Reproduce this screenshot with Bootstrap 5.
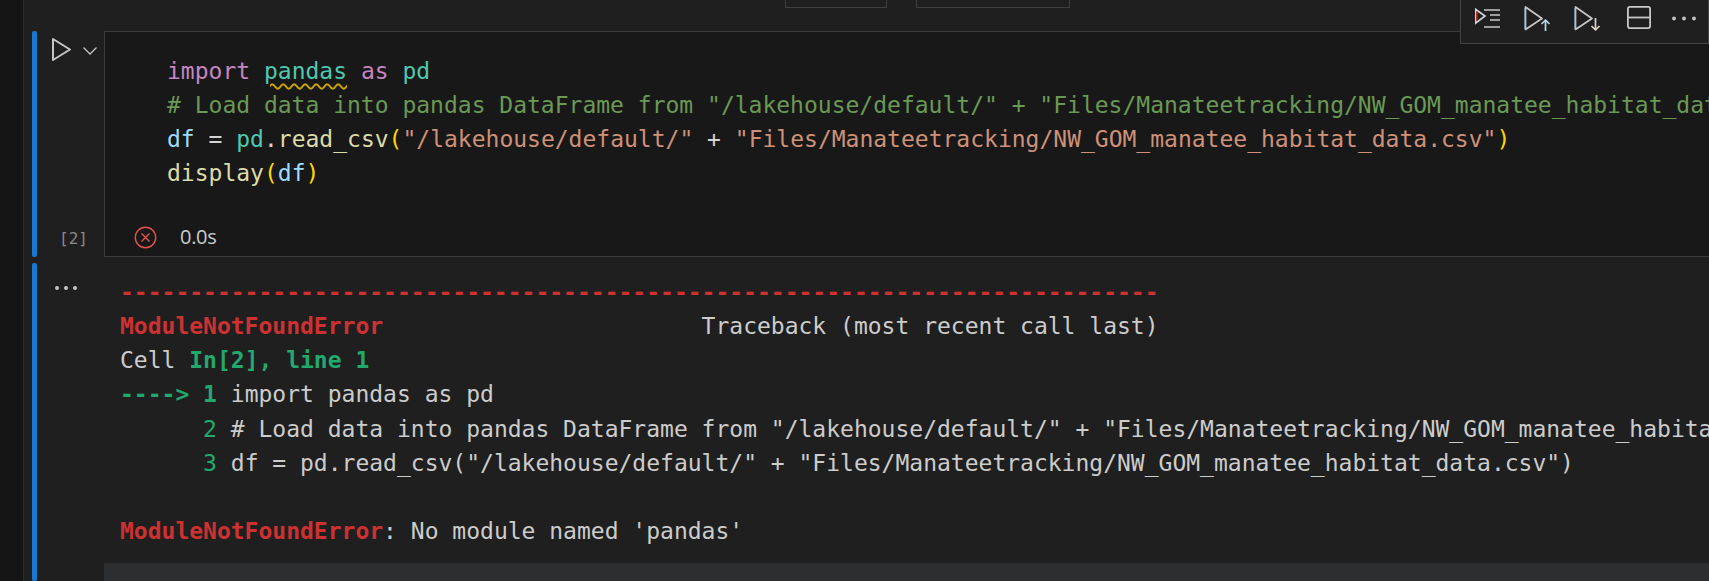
<!doctype html>
<html lang="en"><head><meta charset="utf-8">
<link href="https://cdn.jsdelivr.net/npm/bootstrap@5.3.0/dist/css/bootstrap.min.css" rel="stylesheet">
<style>
html,body{height:581px;overflow:hidden;background:#1f1f1f;margin:0}
.nb-page{height:581px;width:1709px;position:relative;overflow:hidden}
.nb-gutter{width:24px;background:#141414;border-right:1px solid #2a2a2a;flex:none}
.nb-main{flex:1;min-width:0;padding-left:8px;padding-top:31px}
.nb-tab{position:absolute;top:-1px;height:9px;border:1px solid #3f3f3f;background:#1f1f1f}
.nb-tools{position:absolute;top:-1px;left:1460px;width:249px;height:45px;border:1px solid #454545;background:#1f1f1f;z-index:3;padding:0 0 0 13px}
.nb-cell{height:226px}
.nb-bar{width:5px;background:#1a78d0;border-radius:2px;flex:none}
.nb-side{width:67px;flex:none;position:relative}
.nb-editor{flex:1;min-width:0;background:#181818;border:1px solid #3c3c3c;border-right:0;overflow:hidden;padding:22px 0 0 62px;position:relative}
.nb-code,.nb-out{font-family:"DejaVu Sans Mono","Liberation Mono",monospace;font-size:23px;white-space:pre;font-variant-ligatures:none}
.nb-line{height:34.17px;line-height:34.17px}
.nb-code{color:#d4d4d4}
.kw{color:#c586c0}.mod{color:#4ec9b0}.cmt{color:#6a9955}.var{color:#9cdcfe}.fn{color:#dcdcaa}.str{color:#ce9178}.par{color:#ffd700}
.wavy{text-decoration:underline wavy #cca700 1.8px;text-underline-offset:4px}
.nb-status{position:absolute;left:29px;top:188px;height:34px;gap:23px;font-family:"Open Sans","Noto Sans",sans-serif;font-size:20px;color:#cccccc;letter-spacing:-.3px}
.nb-count{position:absolute;left:22px;top:198px;font-family:"DejaVu Sans Mono",monospace;font-size:16px;line-height:20px;color:#8a8a8a}
.nb-output{height:318px;margin-top:6px}
.nb-out{color:#cccccc;padding:12px 0 0 16px;flex:1;min-width:0;overflow:hidden}
.nb-rule{color:#cd3131;font-weight:700}
.nb-errb{color:#cd3131;font-weight:700}
.nb-grn{color:#23a86f}.nb-grnb{color:#23a86f;font-weight:700}
.nb-foot{position:absolute;left:104px;right:0;top:563px;height:18px;background:#2d2e30}
.nb-dots{position:absolute;left:17px;top:22px}
.nb-play{position:absolute;left:14px;top:6px}
.nb-chev{position:absolute;left:45px;top:15px}
</style></head>
<body>
<div class="nb-page d-flex">
  <div class="nb-gutter"></div>
  <div class="nb-main">
    <div class="nb-cell d-flex">
      <div class="nb-bar"></div>
      <div class="nb-side">
        <svg class="nb-play" width="22" height="25" viewBox="0 0 22 25" fill="none" stroke="#c5c5c5" stroke-width="2" stroke-linejoin="round"><path d="M2 2 L19 12.500 L2 23 Z"/></svg>
        <svg class="nb-chev" width="16" height="10" viewBox="0 0 16 10" fill="none" stroke="#c5c5c5" stroke-width="1.3"><path d="M1.500 1.500 L8 8 L14.500 1.500"/></svg>
        <div class="nb-count">[2]</div>
      </div>
      <div class="nb-editor">
        <div class="nb-code"><div class="nb-line"><span class="kw">import</span> <span class="mod wavy">pandas</span> <span class="kw">as</span> <span class="mod">pd</span></div><div class="nb-line cmt"># Load data into pandas DataFrame from "/lakehouse/default/" + "Files/Manateetracking/NW_GOM_manatee_habitat_data.csv"</div><div class="nb-line"><span class="var">df</span> = <span class="mod">pd</span>.<span class="fn">read_csv</span><span class="par">(</span><span class="str">"/lakehouse/default/"</span> + <span class="str">"Files/Manateetracking/NW_GOM_manatee_habitat_data.csv"</span><span class="par">)</span></div><div class="nb-line"><span class="fn">display</span><span class="par">(</span><span class="var">df</span><span class="par">)</span></div></div>
        <div class="nb-status d-flex align-items-center">
          <svg width="23" height="23" viewBox="0 0 23 23" fill="none" stroke="#e5524c" stroke-width="1.4"><circle cx="11.500" cy="11.500" r="10.200"/><path d="M7.500 7.500 L15.500 15.500 M15.500 7.500 L7.500 15.500"/></svg>
          <span>0.0s</span>
        </div>
      </div>
    </div>
    <div class="nb-output d-flex">
      <div class="nb-bar"></div>
      <div class="nb-side">
        <svg class="nb-dots" width="24" height="6" viewBox="0 0 24 6" fill="#c5c5c5"><circle cx="3" cy="3" r="2"/><circle cx="12" cy="3" r="2"/><circle cx="21" cy="3" r="2"/></svg>
      </div>
      <div class="nb-out"><div class="nb-line nb-rule">---------------------------------------------------------------------------</div><div class="nb-line"><span class="nb-errb">ModuleNotFoundError</span>                       Traceback (most recent call last)</div><div class="nb-line">Cell <span class="nb-grnb">In[2], line 1</span></div><div class="nb-line"><span class="nb-grnb">----&gt; 1</span> import pandas as pd</div><div class="nb-line"><span class="nb-grn">      2</span> # Load data into pandas DataFrame from "/lakehouse/default/" + "Files/Manateetracking/NW_GOM_manatee_habitat_data.csv"</div><div class="nb-line"><span class="nb-grn">      3</span> df = pd.read_csv("/lakehouse/default/" + "Files/Manateetracking/NW_GOM_manatee_habitat_data.csv")</div><div class="nb-line"> </div><div class="nb-line"><span class="nb-errb">ModuleNotFoundError</span>: No module named 'pandas'</div></div>
    </div>
  </div>
  <div class="nb-tab" style="left:785px;width:102px"></div>
  <div class="nb-tab" style="left:916px;width:154px"></div>
  <div class="nb-tools d-flex align-items-start">
    <svg width="50" height="36" viewBox="0 0 50 36" fill="none" stroke="#c8c8c8" stroke-width="1.700">
      <path d="M1.800 9.500 V23 L11 16 Z" stroke="#d0d0d0"/><path d="M2.800 11.500 V21" stroke="#b83030"/>
      <path d="M10 10 H26 M16 15 H26 M16 20 H26 M10 27 H26"/>
    </svg>
    <svg width="50" height="36" viewBox="0 0 50 36" fill="none" stroke="#c8c8c8" stroke-width="1.700" stroke-linejoin="round">
      <path d="M1.500 7 V29.500 L18 18.500 Z"/><path d="M1 8 V29" stroke="#7fbdea" stroke-width="1"/>
      <path d="M21.500 31 V20 M17.500 24 L21.500 20 L25.500 24" stroke="#b9d6ea"/>
    </svg>
    <svg width="50" height="36" viewBox="0 0 50 36" fill="none" stroke="#c8c8c8" stroke-width="1.700" stroke-linejoin="round">
      <path d="M1.500 7 V29.500 L18 18.500 Z"/><path d="M1 8 V29" stroke="#7fbdea" stroke-width="1"/>
      <path d="M21.500 18 V30 M17.500 26 L21.500 30 L25.500 26" stroke="#d9d2c8"/>
    </svg>
    <svg width="48" height="36" viewBox="0 0 48 36" fill="none" stroke="#c8c8c8" stroke-width="1.800">
      <rect x="3.900" y="6.900" width="22.200" height="21.200" rx="2"/><path d="M3.900 17.500 H26"/>
    </svg>
    <svg width="26" height="36" viewBox="0 0 26 36" fill="#c5c5c5"><circle cx="2" cy="18.500" r="1.900"/><circle cx="12" cy="18.500" r="1.900"/><circle cx="22" cy="18.500" r="1.900"/></svg>
  </div>
  <div class="nb-foot"></div>
</div>
<script src="https://cdn.jsdelivr.net/npm/bootstrap@5.3.0/dist/js/bootstrap.bundle.min.js"></script>
</body></html>
